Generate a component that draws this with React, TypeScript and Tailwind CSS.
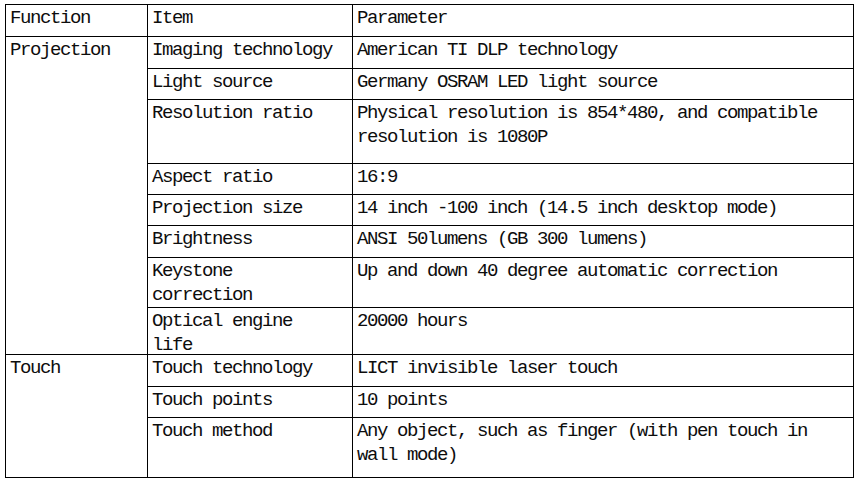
import React from 'react';

interface Spec {
  item: string;
  value: string;
}

interface Group {
  name: string;
  span: string;
  specs: Spec[];
}

const groups: Group[] = [
  {
    name: 'Projection',
    span: 'row-span-8',
    specs: [
      { item: 'Imaging technology', value: 'American TI DLP technology' },
      { item: 'Light source', value: 'Germany OSRAM LED light source' },
      { item: 'Resolution ratio', value: 'Physical resolution is 854*480, and compatible resolution is 1080P' },
      { item: 'Aspect ratio', value: '16:9' },
      { item: 'Projection size', value: '14 inch -100 inch (14.5 inch desktop mode)' },
      { item: 'Brightness', value: 'ANSI 50lumens (GB 300 lumens)' },
      { item: 'Keystone correction', value: 'Up and down 40 degree automatic correction' },
      { item: 'Optical engine life', value: '20000 hours' },
    ],
  },
  {
    name: 'Touch',
    span: 'row-span-3',
    specs: [
      { item: 'Touch technology', value: 'LICT invisible laser touch' },
      { item: 'Touch points', value: '10 points' },
      { item: 'Touch method', value: 'Any object, such as finger (with pen touch in wall mode)' },
    ],
  },
];

const cell = 'bg-white pl-[4px] pt-[2px]';

export default function App() {
  return (
    <div className="w-[858px] h-[482px] bg-white pl-[5px] pt-[4px]">
      <div
        className="grid w-[849px] grid-cols-[141px_204px_500px] grid-rows-[31px_31px_30px_63px_30px_30px_31px_49px_46px_31px_30px_59px] gap-px bg-black p-px text-[19px] leading-[23.5px] tracking-[-1.4px] text-[#0d0d0d]"
        style={{ fontFamily: '"Liberation Mono", "Courier New", monospace' }}
      >
        {/* Header */}
        <div className={cell}>Function</div>
        <div className={cell}>Item</div>
        <div className={cell}>Parameter</div>

        {groups.map((g) => (
          <React.Fragment key={g.name}>
            <div className={`${cell} ${g.span}`}>{g.name}</div>
            {g.specs.map((s) => (
              <React.Fragment key={s.item}>
                <div className={`${cell} pr-[16px]`}>{s.item}</div>
                <div className={`${cell} pr-[4px]`}>{s.value}</div>
              </React.Fragment>
            ))}
          </React.Fragment>
        ))}
      </div>
    </div>
  );
}
